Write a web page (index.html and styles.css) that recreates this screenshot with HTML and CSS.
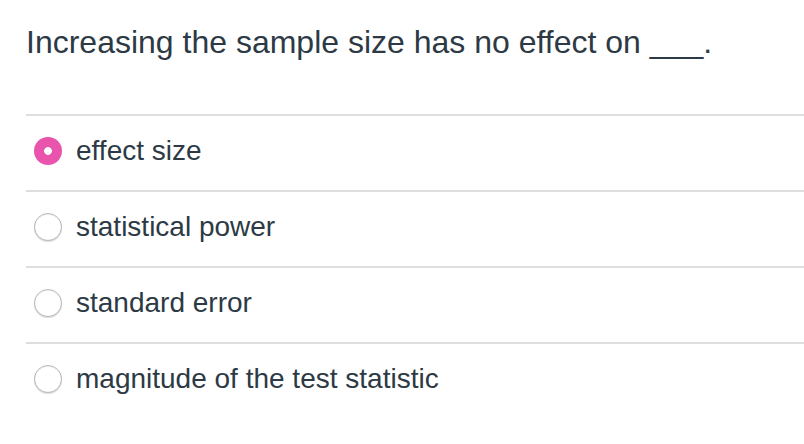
FILE: index.html
```html
<!DOCTYPE html>
<html>
<head>
<meta charset="utf-8">
<link rel="stylesheet" href="styles.css">
</head>
<body>
<div class="question">
  <h1 class="prompt">Increasing the sample size has no effect on ___.</h1>
  <ul class="options">
    <li class="option"><span class="radio checked"></span><span class="label">effect size</span></li>
    <li class="option"><span class="radio"></span><span class="label">statistical power</span></li>
    <li class="option"><span class="radio"></span><span class="label">standard error</span></li>
    <li class="option"><span class="radio"></span><span class="label">magnitude of the test statistic</span></li>
  </ul>
</div>
</body>
</html>
```

FILE: styles.css
```css
html, body {
  margin: 0;
  padding: 0;
  background: #ffffff;
}
body {
  font-family: "Liberation Sans", Arial, sans-serif;
  color: #2d3a45;
}
.question {
  padding-left: 26px;
  padding-top: 25px;
}
.prompt {
  margin: 0;
  font-size: 32px;
  font-weight: normal;
  line-height: 34px;
  height: 89px;
}
.options {
  list-style: none;
  margin: 0;
  padding: 0;
}
.option {
  display: flex;
  align-items: center;
  gap: 14px;
  height: 70px;
  border-top: 2px solid #dedede;
  padding: 0 0 4px 8px;
  box-sizing: content-box;
}
.radio {
  width: 28px;
  height: 28px;
  border-radius: 50%;
  box-sizing: border-box;
  border: 1px solid #b8b8b8;
  background: #ffffff;
  box-shadow: 0 1px 1px rgba(0,0,0,0.15), inset 0 1px 1px rgba(0,0,0,0.06);
  flex: none;
}
.radio.checked {
  border: none;
  background: radial-gradient(circle, #ffffff 0, #ffffff 3.5px, #e955ad 4.2px);
  box-shadow: none;
}
.label {
  font-size: 28px;
  line-height: 32px;
}
```
